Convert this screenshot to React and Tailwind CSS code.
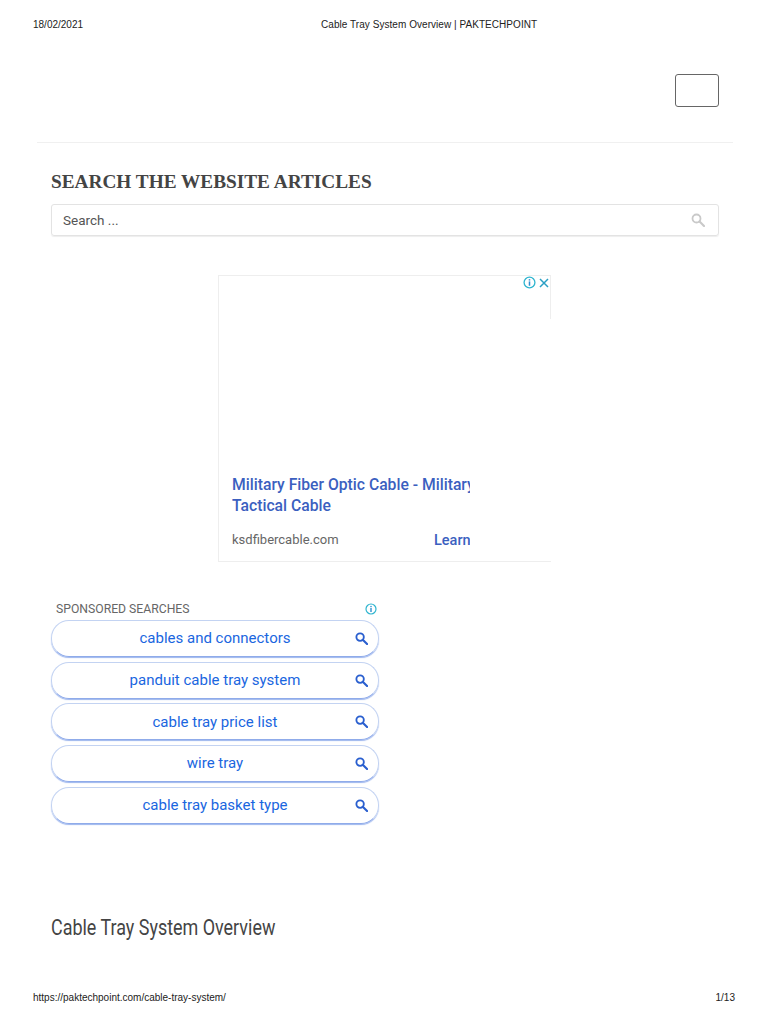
import React from "react";

const pills = [
  "cables and connectors",
  "panduit cable tray system",
  "cable tray price list",
  "wire tray",
  "cable tray basket type",
];

function InfoIcon({ className }) {
  return (
    <svg viewBox="0 0 12 12" className={className} fill="none">
      <circle cx="6" cy="6" r="5" stroke="#2fb5cf" strokeWidth="1.2" />
      <rect x="5.3" y="5" width="1.4" height="4" fill="#2f8fd0" />
      <rect x="5.3" y="2.9" width="1.4" height="1.3" fill="#2f8fd0" />
    </svg>
  );
}

function Glass({ className, color, sw = 2 }) {
  return (
    <svg viewBox="0 0 14 14" className={className} fill="none">
      <circle cx="5.5" cy="5.5" r="4" stroke={color} strokeWidth={sw} />
      <path d="M8.6 8.6 L13 13" stroke={color} strokeWidth={sw + 0.3} strokeLinecap="round" />
    </svg>
  );
}

export default function App() {
  return (
    <div className="w-[768px] h-[1024px] bg-white flex flex-col font-['Roboto',sans-serif] overflow-hidden">
      <header className="flex px-[33px] pt-[19px] h-[74px] text-[10px] leading-[12px] text-[#222] font-['Liberation_Sans',sans-serif]">
        <span className="w-[288px] shrink-0">18/02/2021</span>
        <span className="tracking-[0.05px] whitespace-nowrap">
          Cable Tray System Overview | PAKTECHPOINT
        </span>
      </header>

      <div className="flex justify-end pr-[49px]">
        <div className="w-[44px] h-[33px] border border-[#666] rounded-[3px]" />
      </div>

      <div className="ml-[37px] mr-[35px] mt-[35px] h-px bg-[#f0f0f0]" />

      <section className="pl-[51px] pr-[49px]">
        <h2 className="mt-[27px] h-[24px] leading-[24px] text-[19.3px] font-bold text-[#444] whitespace-nowrap font-['Liberation_Serif',serif]">
          SEARCH THE WEBSITE ARTICLES
        </h2>
        <div className="mt-[10px] h-[32px] flex items-center justify-between pl-[11px] pr-[13px] border border-[#e3e3e3] rounded-[3px] shadow-[0_1px_1px_#eeeeee]">
          <span className="mt-[1px] text-[13.5px] text-[#555]">Search ...</span>
          <Glass className="w-[14px] h-[14px]" color="#c9c9c9" sw={1.8} />
        </div>
      </section>

      <div className="relative mt-[39px] ml-[218px] w-[333px] h-[287px] border-t border-l border-b border-[#eeeeee]">
        <div className="absolute right-0 top-0 h-[43px] w-px bg-[#eeeeee]" />
        <div className="absolute right-[2px] top-0 flex items-center gap-[3px]">
          <InfoIcon className="w-[13px] h-[13px]" />
          <svg viewBox="0 0 10 10" className="w-[10px] h-[10px]" fill="none">
            <path d="M1 1 L9 9 M9 1 L1 9" stroke="#2a9fc4" strokeWidth="1.5" />
          </svg>
        </div>
        <div className="mt-[198px] ml-[13px] w-[238px] overflow-hidden">
          <div className="w-[320px] text-[15.7px] leading-[21px] font-medium text-[#3b5fc0]">
            <div className="whitespace-nowrap">Military Fiber Optic Cable - Military</div>
            <div>Tactical Cable</div>
          </div>
          <div className="mt-[15px] flex items-center whitespace-nowrap h-[18px]">
            <span className="w-[202px] shrink-0 text-[13px] text-[#666]">ksdfibercable.com</span>
            <span className="shrink-0 mt-[1px] text-[14.5px] font-medium text-[#3b5fc0]">Learn more</span>
          </div>
        </div>
      </div>

      <section className="mt-[39px] ml-[51px] w-[328px]">
        <div className="flex items-center justify-between pl-[5px] pr-[2px] h-[16px]">
          <span className="text-[12.2px] text-[#666]">SPONSORED SEARCHES</span>
          <InfoIcon className="w-[12px] h-[12px]" />
        </div>
        <div className="mt-[3px] flex flex-col gap-[4.7px]">
          {pills.map((p) => (
            <div
              key={p}
              className="relative h-[37px] flex items-center justify-center border border-[#c3d3f2] border-b-[#8fabea] rounded-[18px] shadow-[0_1px_1px_#9db6ee] text-[15px] text-[#1a66e0]"
            >
              <span>{p}</span>
              <Glass className="absolute right-[10px] top-[11px] w-[13px] h-[13px]" color="#2a5fcf" />
            </div>
          ))}
        </div>
      </section>

      <h1 className="mt-[91px] ml-[51px] h-[26px] leading-[26px] text-[22px] text-[#444] whitespace-nowrap origin-left scale-x-[.815]">
        Cable Tray System Overview
      </h1>

      <footer className="mt-auto mb-[20px] flex justify-between px-[33px] text-[10px] leading-[12px] text-[#222] font-['Liberation_Sans',sans-serif]">
        <span>https://paktechpoint.com/cable-tray-system/</span>
        <span>1/13</span>
      </footer>
    </div>
  );
}
